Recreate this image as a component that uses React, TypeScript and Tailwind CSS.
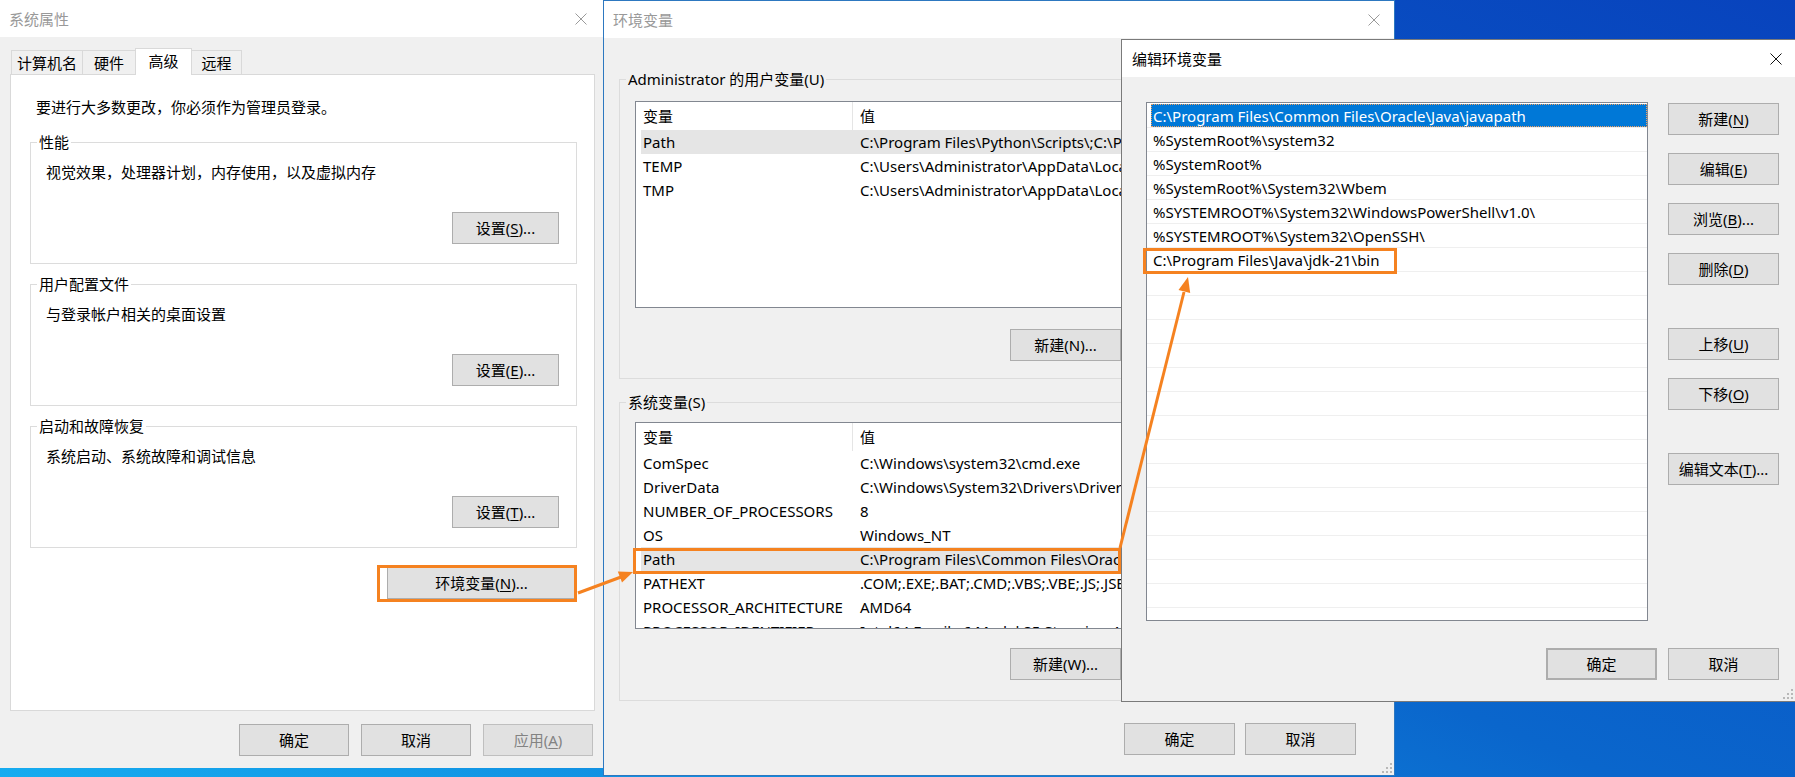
import type { ReactNode } from "react";

const userVars: [string, string][] = [
  ["Path", "C:\\Program Files\\Python\\Scripts\\;C:\\Program Files\\Python\\;%USERPROFILE%\\AppData\\Local\\Microsoft\\WindowsApps;"],
  ["TEMP", "C:\\Users\\Administrator\\AppData\\Local\\Temp"],
  ["TMP", "C:\\Users\\Administrator\\AppData\\Local\\Temp"],
];

const sysVars: [string, string][] = [
  ["ComSpec", "C:\\Windows\\system32\\cmd.exe"],
  ["DriverData", "C:\\Windows\\System32\\Drivers\\DriverData"],
  ["NUMBER_OF_PROCESSORS", "8"],
  ["OS", "Windows_NT"],
  ["Path", "C:\\Program Files\\Common Files\\Oracle\\Java\\javapath;%SystemRoot%\\system32;"],
  ["PATHEXT", ".COM;.EXE;.BAT;.CMD;.VBS;.VBE;.JS;.JSE;.WSF;.WSH;.MSC"],
  ["PROCESSOR_ARCHITECTURE", "AMD64"],
  ["PROCESSOR_IDENTIFIER", "Intel64 Family 6 Model 85 Stepping 4, GenuineIntel"],
];

const pathEntries = [
  "C:\\Program Files\\Common Files\\Oracle\\Java\\javapath",
  "%SystemRoot%\\system32",
  "%SystemRoot%",
  "%SystemRoot%\\System32\\Wbem",
  "%SYSTEMROOT%\\System32\\WindowsPowerShell\\v1.0\\",
  "%SYSTEMROOT%\\System32\\OpenSSH\\",
  "C:\\Program Files\\Java\\jdk-21\\bin",
];

function CloseX({ dark }: { dark?: boolean }) {
  return (
    <svg width="12" height="12" viewBox="0 0 12 12" className={dark ? "text-[#111]" : "text-[#9a9a9a]"}>
      <path d="M0.5 0.5L11.5 11.5M11.5 0.5L0.5 11.5" stroke="currentColor" strokeWidth="1" />
    </svg>
  );
}

function Grip() {
  return (
    <svg width="10" height="10" viewBox="0 0 10 10" className="absolute bottom-[2px] right-[2px]">
      {[
        [8, 0], [8, 4], [4, 4], [8, 8], [4, 8], [0, 8],
      ].map(([x, y]) => (
        <rect key={`${x}-${y}`} x={x} y={y} width="2" height="2" fill="#b8b8b8" />
      ))}
    </svg>
  );
}

function K({ k }: { k: string }) {
  return <span className="underline underline-offset-2">{k}</span>;
}

function Btn({ children, className = "" }: { children: ReactNode; className?: string }) {
  return (
    <div className={`flex h-[32px] shrink-0 items-center justify-center border border-[#adadad] bg-[#e1e1e1] ${className}`}>
      {children}
    </div>
  );
}

function Group({ label, bg, className = "", children }: { label: string; bg: string; className?: string; children: ReactNode }) {
  return (
    <div className={`relative border border-[#dcdcdc] ${className}`}>
      <span className={`absolute left-[6px] top-[-11px] px-[2px] leading-[20px] ${bg}`}>{label}</span>
      {children}
    </div>
  );
}

function VarList({ rows, selected }: { rows: [string, string][]; selected: string }) {
  return (
    <div className="h-[207px] overflow-hidden border border-[#828790] bg-white">
      <div className="flex h-[28px] items-center">
        <div className="ml-[5px] flex h-full w-[212px] items-center border-r border-[#e5e5e5] pl-[2px]">变量</div>
        <div className="pl-[7px]">值</div>
      </div>
      {rows.map(([k, v]) => (
        <div
          key={k}
          className={`ml-[5px] flex h-[24px] items-center overflow-hidden whitespace-nowrap ${k === selected ? "bg-[#e5e5e5]" : ""}`}
        >
          <div className="w-[212px] shrink-0 overflow-hidden pl-[2px]">{k}</div>
          <div className="pl-[7px]">{v}</div>
        </div>
      ))}
    </div>
  );
}

function SystemProperties() {
  const groups: [string, string, string][] = [
    ["性能", "视觉效果，处理器计划，内存使用，以及虚拟内存", "S"],
    ["用户配置文件", "与登录帐户相关的桌面设置", "E"],
    ["启动和故障恢复", "系统启动、系统故障和调试信息", "T"],
  ];
  return (
    <div className="absolute left-0 top-0 flex h-[768px] w-[605px] flex-col bg-[#f0f0f0]">
      <div className="flex h-[37px] items-center justify-between bg-white pl-[9px] pr-[18px] text-[#999]">
        <span>系统属性</span>
        <CloseX />
      </div>
      <div className="px-[10px] pt-[11px]">
        <div className="flex h-[26px] items-end">
          <div className="ml-px flex h-[24px] w-[71px] items-center justify-center border-l border-t border-[#d9d9d9]">计算机名</div>
          <div className="flex h-[24px] w-[53px] items-center justify-center border-l border-t border-[#d9d9d9]">硬件</div>
          <div className="relative z-10 mb-[-1px] flex h-[27px] w-[57px] items-start justify-center border-l border-r border-t border-[#d9d9d9] bg-white pt-[2px]">高级</div>
          <div className="flex h-[24px] w-[50px] items-center justify-center border-r border-t border-[#d9d9d9]">远程</div>
        </div>
        <div className="h-[637px] border border-[#d9d9d9] bg-white pl-[19px] pr-[17px] pt-[22px]">
          <p className="pl-[6px]">要进行大多数更改，你必须作为管理员登录。</p>
          {groups.map(([label, text, key], i) => (
            <Group key={label} label={label} bg="bg-white" className={i === 0 ? "mt-[25px]" : "mt-[20px]"}>
              <div className="pb-[19px] pl-[15px] pr-[17px] pt-[19px]">
                <p>{text}</p>
                <div className="mt-[30px] flex justify-end">
                  <Btn className="w-[107px]">
                    设置(<K k={key} />)...
                  </Btn>
                </div>
              </div>
            </Group>
          ))}
          <div className="mt-[19px] flex justify-end pr-px">
            <Btn className="w-[189px]">
              环境变量(<K k="N" />)...
            </Btn>
          </div>
        </div>
      </div>
      <div className="mt-[13px] flex justify-end gap-[12px] pr-[12px]">
        <Btn className="w-[110px]">确定</Btn>
        <Btn className="w-[110px]">取消</Btn>
        <Btn className="w-[110px] border-[#bfbfbf] bg-[#cccccc] text-[#838383]">
          应用(<K k="A" />)
        </Btn>
      </div>
    </div>
  );
}

function EnvironmentVariables() {
  return (
    <div className="absolute left-[603px] top-0 flex h-[776px] w-[792px] flex-col border border-[#2d78c0] bg-[#f0f0f0]">
      <div className="flex h-[37px] items-center justify-between bg-white pl-[9px] pr-[14px] text-[#999]">
        <span>环境变量</span>
        <CloseX />
      </div>
      <div className="px-[15px] pt-[41px]">
        <Group label="Administrator 的用户变量(U)" bg="bg-[#f0f0f0]">
          <div className="px-[15px] pb-[17px] pt-[21px]">
            <VarList rows={userVars} selected="Path" />
            <div className="mt-[21px] flex justify-end gap-[10px]">
              <Btn className="w-[111px]">新建(N)...</Btn>
              <Btn className="w-[111px]">编辑(E)...</Btn>
              <Btn className="w-[111px]">删除(D)</Btn>
            </div>
          </div>
        </Group>
        <Group label="系统变量(S)" bg="bg-[#f0f0f0]" className="mt-[23px]">
          <div className="px-[15px] pb-[20px] pt-[19px]">
            <VarList rows={sysVars} selected="Path" />
            <div className="mt-[19px] flex justify-end gap-[10px]">
              <Btn className="w-[111px]">新建(W)...</Btn>
              <Btn className="w-[111px]">编辑(I)...</Btn>
              <Btn className="w-[111px]">删除(L)</Btn>
            </div>
          </div>
        </Group>
      </div>
      <div className="mt-[22px] flex justify-end gap-[10px] pr-[38px]">
        <Btn className="w-[111px]">确定</Btn>
        <Btn className="w-[111px]">取消</Btn>
      </div>
      <Grip />
    </div>
  );
}

function EditEnvironmentVariable() {
  const rows = Array.from({ length: 22 }, (_, i) => pathEntries[i] ?? "");
  return (
    <div className="absolute left-[1121px] top-[39px] flex h-[663px] w-[675px] flex-col border border-[#7a7a7a] bg-[#f0f0f0]">
      <div className="flex h-[37px] items-center justify-between bg-white pl-[10px] pr-[13px]">
        <span>编辑环境变量</span>
        <CloseX dark />
      </div>
      <div className="flex pl-[24px] pt-[25px]">
        <div className="h-[519px] w-[502px] overflow-hidden border border-[#828790] bg-white pt-px">
          {rows.map((p, i) => (
            <div key={i} className="h-[24px] border-b border-[#efefef] pl-[4px] whitespace-nowrap">
              <div
                className={`flex h-full items-center pl-[2px] ${
                  i === 0 ? "bg-[#0078d7] text-white outline-1 -outline-offset-1 outline-dotted outline-[#f0a060]" : ""
                }`}
              >
                {p}
              </div>
            </div>
          ))}
        </div>
        <div className="ml-[20px] flex flex-col pt-px">
          <Btn className="w-[111px]">
            新建(<K k="N" />)
          </Btn>
          <Btn className="mt-[18px] w-[111px]">
            编辑(<K k="E" />)
          </Btn>
          <Btn className="mt-[18px] w-[111px]">
            浏览(<K k="B" />)...
          </Btn>
          <Btn className="mt-[18px] w-[111px]">
            删除(<K k="D" />)
          </Btn>
          <Btn className="mt-[43px] w-[111px]">
            上移(<K k="U" />)
          </Btn>
          <Btn className="mt-[18px] w-[111px]">
            下移(<K k="O" />)
          </Btn>
          <Btn className="mt-[43px] w-[111px]">
            编辑文本(<K k="T" />)...
          </Btn>
        </div>
      </div>
      <div className="mt-[27px] flex justify-end gap-[11px] pr-[16px]">
        <Btn className="w-[111px] border-2 border-[#0078d7]">确定</Btn>
        <Btn className="w-[111px]">取消</Btn>
      </div>
      <Grip />
    </div>
  );
}

export default function App() {
  return (
    <div className="relative h-[777px] w-[1795px] overflow-hidden bg-[linear-gradient(to_bottom_left,#0843bd,#0a66cc_55%,#16acf0)] font-['Noto_Sans','Noto_Sans_CJK_SC',sans-serif] text-[15px] leading-[20px] text-black">
      <SystemProperties />
      <EnvironmentVariables />
      <EditEnvironmentVariable />

      {/* annotation frames */}
      <div className="pointer-events-none absolute left-[377px] top-[565px] h-[37px] w-[200px] border-[3px] border-[#f58220]" />
      <div className="pointer-events-none absolute left-[633px] top-[548px] h-[26px] w-[488px] border-[3px] border-[#f58220]" />
      <div className="pointer-events-none absolute left-[1143px] top-[248px] h-[26px] w-[254px] border-[3px] border-[#f58220]" />

      <svg className="pointer-events-none absolute left-0 top-0" width="1795" height="777">
        <line x1="578" y1="593" x2="621" y2="577" stroke="#f58220" strokeWidth="3" />
        <polygon points="633,572 622,582.6 617.8,571.4" fill="#f58220" />
        <line x1="1120" y1="548" x2="1184" y2="292" stroke="#f58220" strokeWidth="3" />
        <polygon points="1188,277 1190.2,293 1178.5,290.1" fill="#f58220" />
      </svg>
    </div>
  );
}
